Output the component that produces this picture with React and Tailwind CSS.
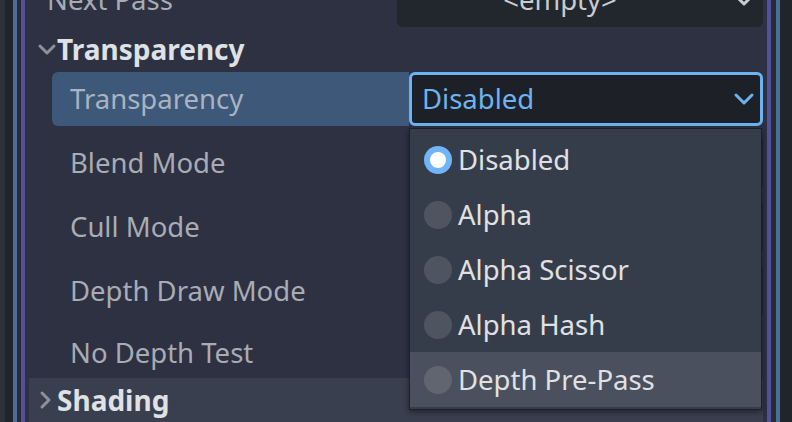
import React from "react";

const Chevron = ({ className = "", color = "#6db3f2" }) => (
  <svg width="22" height="14" viewBox="0 0 22 14" className={className}>
    <polyline points="3,3 11,11 19,3" fill="none" stroke={color} strokeWidth="3" strokeLinecap="round" strokeLinejoin="round" />
  </svg>
);

const SmallChevron = () => (
  <svg width="20" height="14" viewBox="0 0 20 14">
    <polyline points="3,4 10,11 17,4" fill="none" stroke="#8c919b" strokeWidth="3" strokeLinecap="round" strokeLinejoin="round" />
  </svg>
);

const ChevronRight = () => (
  <svg width="14" height="20" viewBox="0 0 14 20">
    <polyline points="3,3 10,10 3,17" fill="none" stroke="#8c919b" strokeWidth="3" strokeLinecap="round" strokeLinejoin="round" />
  </svg>
);

const PropRow = ({ label, height = "h-[54px]", button = true }) => (
  <div className={`flex ${height} ml-[27px] mr-[4px] shrink-0`}>
    <div className="flex-1 flex items-center pl-[18px] text-[#a8acb4]">{label}</div>
    {button ? (
      <div className="w-[354px] rounded-[6px] bg-[#22262d]"></div>
    ) : (
      <div className="w-[354px]"></div>
    )}
  </div>
);

const items = ["Disabled", "Alpha", "Alpha Scissor", "Alpha Hash", "Depth Pre-Pass"];

export default function App() {
  return (
    <div className="w-[792px] h-[422px] overflow-hidden flex bg-[#20242b] text-[27.5px] leading-none [font-family:'Noto_Sans',sans-serif]">
      <div className="w-[5px] bg-[#2c313a] shrink-0"></div>
      <div className="w-[8px] bg-[#20242b] shrink-0"></div>
      <div className="w-[4px] bg-[#4b6e96] shrink-0"></div>
      <div className="w-[4px] bg-[#272b37] shrink-0"></div>
      <div className="w-[4px] bg-[#56509a] shrink-0"></div>

      <div className="relative w-[742px] shrink-0 bg-[#2d3142] flex flex-col">
        {/* Next Pass */}
        <div className="flex h-[54px] mt-[-27px] mr-[4px] shrink-0">
          <div className="flex-1 flex items-center pl-[22px] text-[#a8acb4]">Next Pass</div>
          <div className="w-[366px] rounded-[6px] bg-[#22262d] flex items-center justify-center relative text-[#c9ccd1] pr-[40px]">
            &lt;empty&gt;
            <Chevron className="absolute right-[8px]" color="#c9ccd1" />
          </div>
        </div>

        {/* Transparency header */}
        <div className="flex items-center h-[38px] mt-[3px] shrink-0 pl-[12px]">
          <SmallChevron />
          <span className="font-bold text-[28px] text-[#dfe1e4] ml-[0px]">Transparency</span>
        </div>

        {/* Transparency row */}
        <div className="flex h-[54px] mt-[4px] ml-[27px] mr-[4px] shrink-0">
          <div className="flex-1 flex items-center pl-[18px] text-[#a9b3c1] bg-[#3e5879] rounded-l-[6px]">Transparency</div>
          <div className="w-[354px] rounded-[6px] bg-[#1d2027] border-[3px] border-[#6db3f2] flex items-center pl-[10px] pr-[5px] text-[#6db3f2]">
            <span className="flex-1">Disabled</span>
            <Chevron />
          </div>
        </div>

        <div className="h-[10px] shrink-0"></div>
        <PropRow label="Blend Mode" />
        <div className="h-[10px] shrink-0"></div>
        <PropRow label="Cull Mode" />
        <div className="h-[10px] shrink-0"></div>
        <PropRow label="Depth Draw Mode" />
        <div className="h-[10px] shrink-0"></div>
        <PropRow label="No Depth Test" height="h-[50px]" button={false} />

        {/* Shading header */}
        <div className="flex items-center h-[44px] ml-[4px] mr-[4px] shrink-0 bg-[#3a3f4f] pl-[10px]">
          <ChevronRight />
          <span className="font-bold text-[28px] text-[#dfe1e4] ml-[4px]">Shading</span>
        </div>

        {/* Popup */}
        <div className="absolute left-[384px] top-[128px] w-[353px] h-[282px] bg-[#363d4a] border border-[#1d2026] shadow-[0_2px_6px_rgba(0,0,0,0.45)] pt-[3px] flex flex-col">
          {items.map((it, i) => (
            <div key={it} className={`h-[55px] flex items-center pl-[14px] text-[#e0e1e4] ${i === 4 ? "bg-[#4a505d]" : ""}`}>
              {i === 0 ? (
                <div className="w-[28px] h-[28px] rounded-full bg-[#70b5f7] flex items-center justify-center">
                  <div className="w-[16px] h-[16px] rounded-full bg-white"></div>
                </div>
              ) : (
                <div className="w-[28px] h-[28px] rounded-full bg-white/[0.12]"></div>
              )}
              <span className="ml-[6px]">{it}</span>
            </div>
          ))}
        </div>
      </div>

      <div className="w-[4px] bg-[#56509a] shrink-0"></div>
      <div className="w-[5px] bg-[#272b37] shrink-0"></div>
      <div className="w-[4px] bg-[#4b6e96] shrink-0"></div>
      <div className="flex-1 bg-[#20242b]"></div>
    </div>
  );
}
